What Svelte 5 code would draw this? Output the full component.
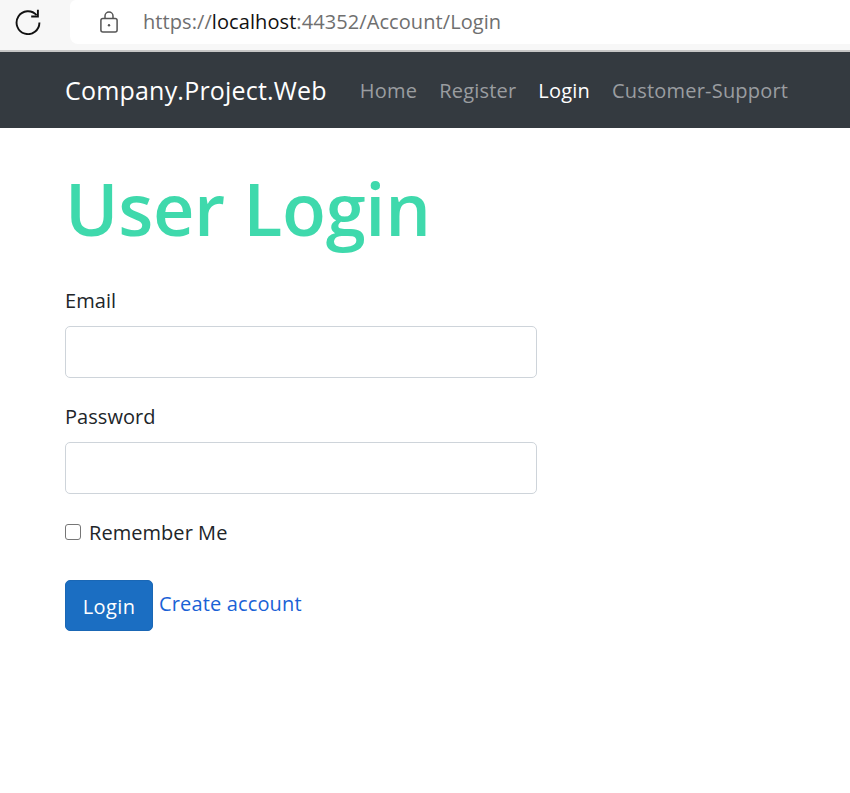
<script>
  const navLinks = [
    { label: 'Home', active: false },
    { label: 'Register', active: false },
    { label: 'Login', active: true },
    { label: 'Customer-Support', active: false }
  ];
</script>

<div class="browser-bar">
  <button class="reload" aria-label="Reload">
    <svg width="26" height="26" viewBox="0 0 26 26" fill="none" stroke="#111" stroke-width="1.9">
      <path d="M21.6 6.2A11.4 11.4 0 1 0 24.4 13.6" />
      <path d="M22.9 0.8v6.7H16.2" />
    </svg>
  </button>
  <div class="address">
    <svg class="lock" width="18" height="22" viewBox="0 0 18 22" fill="none" stroke="#555" stroke-width="1.5">
      <rect x="0.9" y="7.5" width="16.2" height="13.6" rx="2" />
      <path d="M5 7.5V5a4 4 0 0 1 8 0v2.5" />
      <circle cx="9" cy="14.2" r="1.2" fill="#555" stroke="none" />
    </svg>
    <span class="url">https://<b>localhost</b>:44352/Account/Login</span>
  </div>
</div>

<nav class="navbar">
  <span class="brand">Company.Project.Web</span>
  <ul>
    {#each navLinks as link}
      <li class:active={link.active}>{link.label}</li>
    {/each}
  </ul>
</nav>

<main>
  <h1>User Login</h1>
  <form>
    <div class="group">
      <label for="email">Email</label>
      <input id="email" type="text" />
    </div>
    <div class="group">
      <label for="password">Password</label>
      <input id="password" type="password" />
    </div>
    <div class="remember">
      <input id="remember" type="checkbox" />
      <label for="remember">Remember Me</label>
    </div>
    <div class="actions">
      <button class="btn" type="button">Login</button>
      <a href="#create">Create account</a>
    </div>
  </form>
</main>

<style>
  :global(body) {
    font-family: "Open Sans", "Noto Sans", sans-serif;
    background: #fff;
    color: #212529;
  }

  .browser-bar {
    height: 50px;
    background: #f7f7f7;
    border-bottom: 2px solid #c6c6c6;
    display: flex;
    box-sizing: content-box;
  }

  .reload {
    width: 70px;
    height: 44px;
    padding: 0 0 0 15px;
    border: 0;
    background: none;
    display: flex;
    align-items: center;
  }

  .address {
    flex: 1;
    height: 44px;
    background: #fff;
    border-radius: 6px 0 0 8px;
    display: flex;
    align-items: center;
    padding-left: 30px;
  }

  .lock {
    margin-right: 25px;
  }

  .url {
    font-size: 20px;
    letter-spacing: 0.08px;
    color: #6f6f6f;
    padding-bottom: 2px;
  }

  .url b {
    font-weight: 400;
    color: #111;
  }

  .navbar {
    height: 76px;
    background: #343a40;
    display: flex;
    align-items: center;
    padding-left: 65px;
  }

  .brand {
    color: #fff;
    font-size: 25px;
    letter-spacing: 0.2px;
    margin-right: 33px;
  }

  ul {
    display: flex;
    gap: 22px;
    margin: 0;
    padding: 0;
    list-style: none;
    font-size: 20px;
    letter-spacing: 0.2px;
    color: #9a9da0;
  }

  li.active {
    color: #fff;
  }

  main {
    padding: 0 65px;
  }

  h1 {
    margin: 31px 0 29px;
    font-size: 72px;
    line-height: 98px;
    font-weight: 600;
    letter-spacing: -0.3px;
    color: #3fd9ac;
  }

  form {
    width: 472px;
    font-size: 20px;
    letter-spacing: 0.05px;
  }

  .group {
    margin-bottom: 24px;
  }

  .group label {
    display: block;
    line-height: 30px;
    margin-bottom: 10px;
  }

  .group input {
    display: block;
    box-sizing: border-box;
    width: 100%;
    height: 52px;
    border: 1px solid #ced4da;
    border-radius: 5px;
    background: #fff;
  }

  .remember {
    display: flex;
    align-items: center;
    line-height: 30px;
  }

  .remember input {
    appearance: none;
    box-sizing: border-box;
    width: 16px;
    height: 16px;
    margin: 0 8px 2px 0;
    background: #fff;
    border: 1.5px solid #767676;
    border-radius: 3px;
  }

  .actions {
    display: flex;
    margin-top: 32px;
    gap: 6px;
  }

  .btn {
    width: 88px;
    height: 51px;
    padding: 2px 0 0;
    background: #1b6ec2;
    border: 1px solid #1a67b5;
    border-radius: 5px;
    color: #fff;
    font: inherit;
    letter-spacing: 0.4px;
  }

  a {
    color: #1a62d6;
    text-decoration: none;
    line-height: 48px;
    letter-spacing: 0.15px;
  }
</style>
